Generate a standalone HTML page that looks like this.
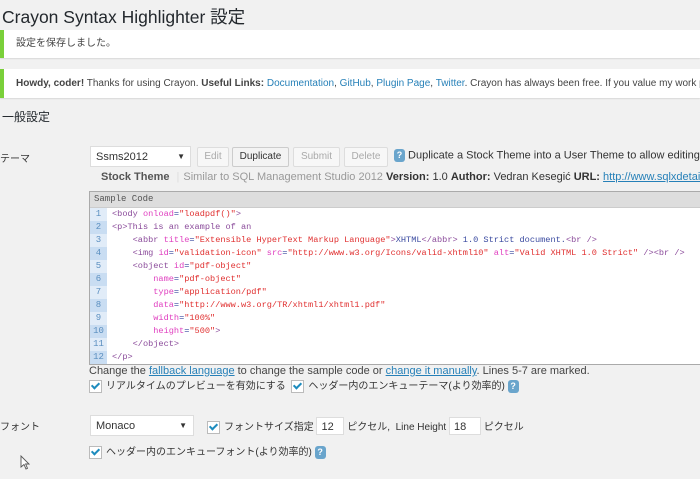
<!DOCTYPE html>
<html><head><meta charset="utf-8"><style>
body{margin:0;width:700px;height:479px;overflow:hidden;background:#f1f1f1;font-family:"Liberation Sans","Noto Sans CJK JP",sans-serif;color:#444;position:relative}
.a{position:absolute;white-space:nowrap}
h1{position:absolute;left:2px;top:4px;margin:0;font-weight:normal;font-size:17.5px;color:#23282d;white-space:nowrap}
.notice{position:absolute;left:0;width:700px;background:#fff;border-left:4px solid #7ad03a;box-shadow:0 1px 1px rgba(0,0,0,.1);font-size:10px;color:#444;white-space:nowrap;overflow:hidden;box-sizing:border-box}
.btn{position:absolute;top:147px;height:18px;border:1px solid #ddd;border-radius:2px;background:#f7f7f7;font-size:10px;color:#aaa;text-align:center;line-height:18px}
.sel{position:absolute;background:#fff;border:1px solid #ddd;font-size:11px;color:#333;line-height:20px;padding-left:5px;box-sizing:border-box}
.q{display:inline-block;width:11px;height:13px;background:#6aa5cc;border-radius:3px;color:#fff;font-size:9px;font-weight:bold;text-align:center;line-height:13px;vertical-align:middle}
.cb{display:inline-block;width:11px;height:11px;border:1px solid #bbb;background:#fff;vertical-align:middle;position:relative;margin-right:4px}
.cb:after{content:"";position:absolute;left:3px;top:0px;width:3px;height:6px;border:solid #1e8cbe;border-width:0 2px 2px 0;transform:rotate(45deg)}
.code{position:absolute;left:89px;top:191px;width:620px;height:172px;border:1px solid #aaa;background:#fff;overflow:hidden}
.code .hd{height:15px;background:#ddd;border-bottom:1px solid #ccc;font-family:"Liberation Mono",monospace;font-size:9px;line-height:15px;padding-left:4px;color:#555}
.ln{position:absolute;left:0;top:16px;width:17px}
.ln div{height:13px;font-family:"Liberation Mono",monospace;font-size:9px;line-height:13px;text-align:center;color:#5b8fc0}
.ln div:nth-child(odd){background:#e1ecf8}.ln div:nth-child(even){background:#c9ddf2}
.src{position:absolute;left:22px;top:16px;font-family:"Liberation Mono",monospace;font-size:8.6px;line-height:13px;white-space:pre;color:#3a4aa0}
.t{color:#8a4a9a}.at{color:#e040c0}.s{color:#e03030}
a{color:#2680b8}
</style></head><body>
<h1>Crayon Syntax Highlighter 設定</h1>
<div class="notice" style="top:30px;height:28px;line-height:28px;padding-left:12px">設定を保存しました。</div>
<div class="notice" style="top:69px;height:29px;line-height:29px;padding-left:12px"><b>Howdy, coder!</b> Thanks for using Crayon. <b>Useful Links:</b> <a>Documentation</a>, <a>GitHub</a>, <a>Plugin Page</a>, <a>Twitter</a>. Crayon has always been free. If you value my work please consider</div>
<div class="a" style="left:2px;top:108px;font-size:12px;color:#23282d">一般設定</div>
<div class="a" style="left:0;top:150px;font-size:10px;color:#333">テーマ</div>
<div class="sel" style="left:90px;top:146px;width:101px;height:21px">Ssms2012<span style="position:absolute;right:5px;font-size:8px">▼</span></div>
<div class="btn" style="left:197px;width:30px">Edit</div>
<div class="btn" style="left:232px;width:55px;color:#333;background:#f3f3f3;border-color:#ccc">Duplicate</div>
<div class="btn" style="left:293px;width:45px">Submit</div>
<div class="btn" style="left:344px;width:42px">Delete</div>
<div class="a" style="left:394px;top:149px;font-size:11px;color:#333"><span class="q">?</span> Duplicate a Stock Theme into a User Theme to allow editing.</div>
<div class="a" style="left:101px;top:171px;font-size:11px;color:#333"><b style="color:#555">Stock Theme</b> <span style="color:#ddd;margin:0 4px">|</span><span style="color:#999">Similar to SQL Management Studio 2012</span> <b>Version:</b> 1.0 <b>Author:</b> Vedran Kesegić <b>URL:</b> <a style="color:#2680b8;text-decoration:underline">http://www.sqlxdetails.com/</a></div>
<div class="code"><div class="hd">Sample Code</div>
<div class="ln"><div>1</div><div>2</div><div>3</div><div>4</div><div>5</div><div>6</div><div>7</div><div>8</div><div>9</div><div>10</div><div>11</div><div>12</div></div>
<div class="src"><span class="t">&lt;body</span> <span class="at">onload</span>=<span class="s">"loadpdf()"</span><span class="t">&gt;</span>
<span class="t">&lt;p&gt;</span><span class="t">This is an example of an</span>
    <span class="t">&lt;abbr</span> <span class="at">title</span>=<span class="s">"Extensible HyperText Markup Language"</span><span class="t">&gt;</span>XHTML<span class="t">&lt;/abbr&gt;</span> 1.0 Strict document.<span class="t">&lt;br /&gt;</span>
    <span class="t">&lt;img</span> <span class="at">id</span>=<span class="s">"validation-icon"</span> <span class="at">src</span>=<span class="s">"http://www.w3.org/Icons/valid-xhtml10"</span> <span class="at">alt</span>=<span class="s">"Valid XHTML 1.0 Strict"</span> <span class="t">/&gt;&lt;br /&gt;</span>
    <span class="t">&lt;object</span> <span class="at">id</span>=<span class="s">"pdf-object"</span>
        <span class="at">name</span>=<span class="s">"pdf-object"</span>
        <span class="at">type</span>=<span class="s">"application/pdf"</span>
        <span class="at">data</span>=<span class="s">"http://www.w3.org/TR/xhtml1/xhtml1.pdf"</span>
        <span class="at">width</span>=<span class="s">"100%"</span>
        <span class="at">height</span>=<span class="s">"500"</span><span class="t">&gt;</span>
    <span class="t">&lt;/object&gt;</span>
<span class="t">&lt;/p&gt;</span></div></div>
<div class="a" style="left:89px;top:365px;font-size:11px;color:#444">Change the <a style="text-decoration:underline">fallback language</a> to change the sample code or <a style="text-decoration:underline">change it manually</a>. Lines 5-7 are marked.</div>
<div class="a" style="left:89px;top:377px;font-size:10px;color:#333"><span class="cb"></span>リアルタイムのプレビューを有効にする &nbsp;<span class="cb"></span>ヘッダー内のエンキューテーマ(より効率的) <span class="q">?</span></div>
<div class="a" style="left:0;top:418px;font-size:10px;color:#333">フォント</div>
<div class="sel" style="left:90px;top:415px;width:104px;height:21px">Monaco<span style="position:absolute;right:6px;font-size:8px">▼</span></div>
<div class="a" style="left:207px;top:417px;font-size:10px;color:#333;line-height:18px"><span class="cb"></span>フォントサイズ指定 <span style="display:inline-block;width:28px;height:18px;background:#fff;border:1px solid #ddd;padding-left:4px;box-sizing:border-box;font-size:11px">12</span> ピクセル, &nbsp;Line Height <span style="display:inline-block;width:32px;height:18px;background:#fff;border:1px solid #ddd;padding-left:4px;box-sizing:border-box;font-size:11px">18</span> ピクセル</div>
<div class="a" style="left:89px;top:443px;font-size:10px;color:#333"><span class="cb"></span>ヘッダー内のエンキューフォント(より効率的) <span class="q">?</span></div>
<svg class="a" style="left:20px;top:455px" width="10" height="15" viewBox="0 0 10 15"><path d="M1 1 L1 12 L4 9.5 L6 14 L7.5 13.3 L5.6 9 L9 9 Z" fill="#fff" stroke="#555" stroke-width="0.9"/></svg>
</body></html>
